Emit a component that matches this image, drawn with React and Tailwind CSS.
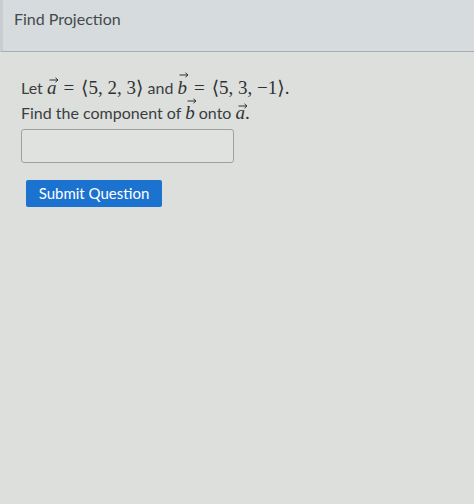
// Vector letter with a small arrow drawn over it
const Vec = ({ letter, tall }) => (
  <span className="relative inline-block italic">
    <svg
      className={`absolute left-[2px] ${tall ? '-top-[3px]' : 'top-[2px]'} w-[10px] h-[6px]`}
      viewBox="0 0 10 6"
      fill="none"
      stroke="currentColor"
      strokeWidth="1"
    >
      <path d="M0.5 3h8.5M6.5 0.8L9 3L6.5 5.2" />
    </svg>
    {letter}
  </span>
);

const Math = ({ children }) => (
  <span className="font-['Liberation_Serif','DejaVu_Serif',serif] text-[19px] text-[#2f3235]">{children}</span>
);

const Eq = () => <span className="mx-[7px]">=</span>;

const App = () => {
  return (
    <div className="min-h-[504px] w-[474px] bg-[#dcdfdc] text-[#3a3d40] font-['Lato','Open_Sans',sans-serif]">
      {/* Title bar */}
      <div className="h-[52px] bg-[#d6dbdd] border-b border-[#a9adae] pl-[11px] pt-[7px] border-l-[3px] border-l-[#c9cdcf]">
        <h1 className="text-[16px] text-[#45494c]">Find Projection</h1>
      </div>

      {/* Question body */}
      <div className="pl-[21px] pt-[23px]">
        <p className="text-[16px] leading-[26px] text-[#3b3e41]">
          Let{' '}
          <Math>
            <Vec letter="a" /><Eq />&#10216;5, 2, 3&#10217;
          </Math>{' '}
          and{' '}
          <Math>
            <Vec letter="b" tall /><Eq />&#10216;5, 3, &minus;1&#10217;.
          </Math>
        </p>
        <p className="text-[16px] leading-[24px] text-[#3b3e41]">
          Find the component of{' '}
          <Math>
            <Vec letter="b" tall />
          </Math>{' '}
          onto{' '}
          <Math>
            <Vec letter="a" />.
          </Math>
        </p>

        <input
          type="text"
          className="mt-[4px] block w-[213px] h-[34px] rounded-[3px] border border-[#9da1a2] bg-[#dfe2df]"
        />

        <button className="mt-[17px] ml-[5px] h-[27px] w-[136px] rounded-[2px] bg-[#1b72cf] text-[15px] text-white">
          Submit Question
        </button>
      </div>
    </div>
  );
};

export default App;
